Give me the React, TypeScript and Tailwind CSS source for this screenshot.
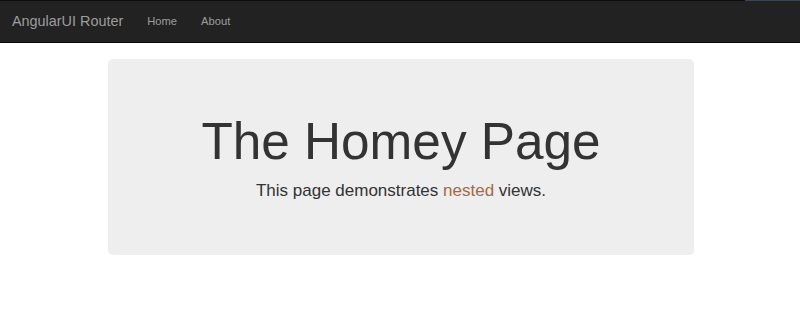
export default function App() {
  return (
    <div className="min-h-[330px] bg-white font-['Liberation_Sans',Arial,sans-serif]">
      <div className="flex h-[1px]">
        <div className="flex-1 bg-[#0e0e0e]" />
        <div className="w-[55px] bg-[#3a4652]" />
      </div>
      <nav className="flex h-[42px] items-center border-b border-[#080808] bg-[#222222]">
        <a className="px-[12px] text-[14.4px] text-[#9d9d9d]" href="#">
          AngularUI Router
        </a>
        <ul className="flex">
          <li>
            <a className="block px-[12px] text-[11.2px] text-[#9d9d9d]" href="#">
              Home
            </a>
          </li>
          <li>
            <a className="block px-[12px] text-[11.2px] text-[#9d9d9d]" href="#">
              About
            </a>
          </li>
        </ul>
      </nav>
      <div className="ml-[108px] mt-[16px] w-[586px] rounded-[5px] bg-[#eeeeee] pb-[52px] pt-[55px] text-center text-[#333333]">
        <h1 className="text-[51.3px] leading-[56px]">The Homey Page</h1>
        <p className="mt-[9px] text-[17px] leading-[24px]">
          This page demonstrates <span className="text-[#a8683f]">nested</span> views.
        </p>
      </div>
    </div>
  );
}
